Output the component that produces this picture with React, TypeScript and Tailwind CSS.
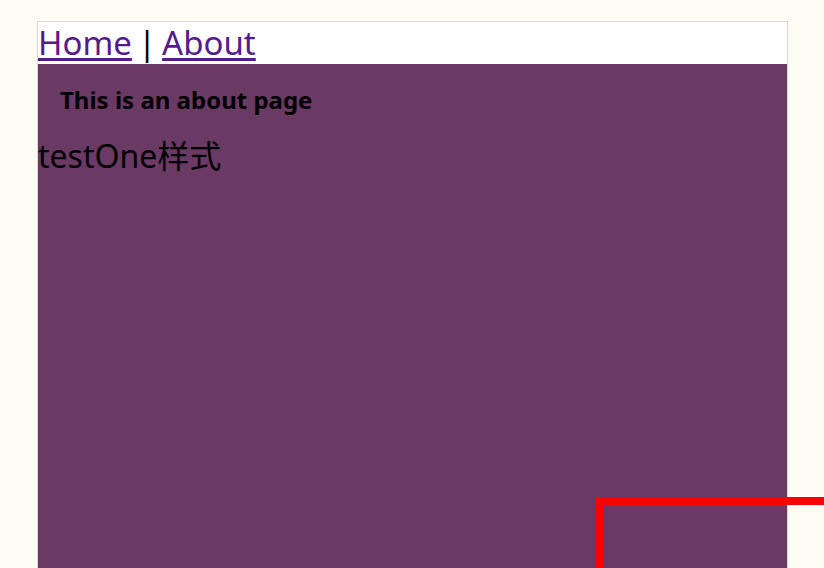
import React from "react";

const font = { fontFamily: '"Noto Sans", "Noto Sans CJK SC", sans-serif' };

function Nav() {
  return (
    <nav className="h-[42px] text-[33px] leading-[42px] text-black">
      <a href="#home" className="text-[#551a8b] underline underline-offset-[3px]">
        Home
      </a>
      <span className="mx-[6px]">|</span>
      <a href="#about" className="text-[#551a8b] underline underline-offset-[3px]">
        About
      </a>
    </nav>
  );
}

function AboutPage() {
  return (
    <div className="h-[520px] bg-[#6a3a65] text-black">
      <h3 className="pl-[22px] pt-[20px] text-[24px] font-bold leading-[32px]">
        This is an about page
      </h3>
      <div className="mt-[21px] text-[32px] leading-[38px]">testOne样式</div>
    </div>
  );
}

export default function App() {
  return (
    <div className="min-h-[568px] overflow-hidden bg-[#fcfcf2] pt-[21px]" style={font}>
      <div className="ml-[37px] w-[751px] border border-b-0 border-[#d8d8d8] bg-white">
        <Nav />
        <AboutPage />
      </div>
      {/* floating outlined box in the corner */}
      <div className="fixed left-[596px] top-[497px] h-[200px] w-[400px] border-8 border-[#ff0000]" />
    </div>
  );
}
